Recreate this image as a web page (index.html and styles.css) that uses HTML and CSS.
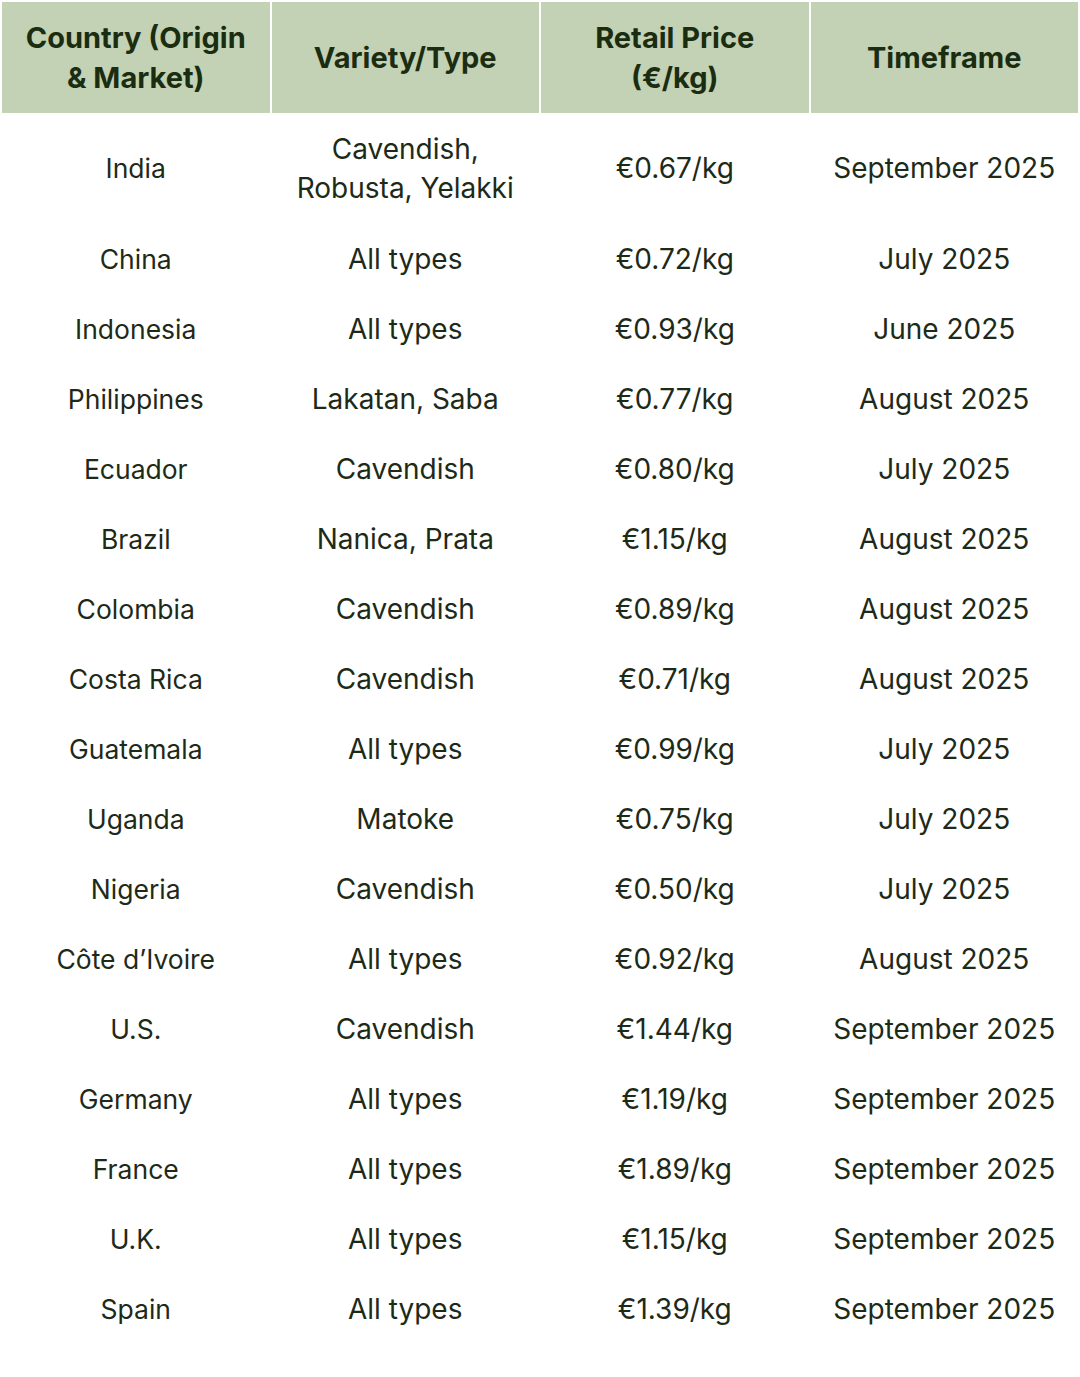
FILE: index.html
```html
<!DOCTYPE html>
<html lang="en">
<head>
<meta charset="utf-8">
<title>Banana retail prices</title>
<link rel="stylesheet" href="styles.css">
</head>
<body>
<table class="prices">
  <thead>
    <tr>
      <th>Country (Origin<br>&amp; Market)</th>
      <th>Variety/Type</th>
      <th>Retail Price<br>(€/kg)</th>
      <th>Timeframe</th>
    </tr>
  </thead>
  <tbody>
    <tr class="tall"><td class="country">India</td><td>Cavendish,<br>Robusta, Yelakki</td><td>€0.67/kg</td><td>September 2025</td></tr>
    <tr><td class="country">China</td><td>All types</td><td>€0.72/kg</td><td>July 2025</td></tr>
    <tr><td class="country">Indonesia</td><td>All types</td><td>€0.93/kg</td><td>June 2025</td></tr>
    <tr><td class="country">Philippines</td><td>Lakatan, Saba</td><td>€0.77/kg</td><td>August 2025</td></tr>
    <tr><td class="country">Ecuador</td><td>Cavendish</td><td>€0.80/kg</td><td>July 2025</td></tr>
    <tr><td class="country">Brazil</td><td>Nanica, Prata</td><td>€1.15/kg</td><td>August 2025</td></tr>
    <tr><td class="country">Colombia</td><td>Cavendish</td><td>€0.89/kg</td><td>August 2025</td></tr>
    <tr><td class="country">Costa Rica</td><td>Cavendish</td><td>€0.71/kg</td><td>August 2025</td></tr>
    <tr><td class="country">Guatemala</td><td>All types</td><td>€0.99/kg</td><td>July 2025</td></tr>
    <tr><td class="country">Uganda</td><td>Matoke</td><td>€0.75/kg</td><td>July 2025</td></tr>
    <tr><td class="country">Nigeria</td><td>Cavendish</td><td>€0.50/kg</td><td>July 2025</td></tr>
    <tr><td class="country">Côte d’Ivoire</td><td>All types</td><td>€0.92/kg</td><td>August 2025</td></tr>
    <tr><td class="country">U.S.</td><td>Cavendish</td><td>€1.44/kg</td><td>September 2025</td></tr>
    <tr><td class="country">Germany</td><td>All types</td><td>€1.19/kg</td><td>September 2025</td></tr>
    <tr><td class="country">France</td><td>All types</td><td>€1.89/kg</td><td>September 2025</td></tr>
    <tr><td class="country">U.K.</td><td>All types</td><td>€1.15/kg</td><td>September 2025</td></tr>
    <tr><td class="country">Spain</td><td>All types</td><td>€1.39/kg</td><td>September 2025</td></tr>
  </tbody>
</table>
</body>
</html>
```
FILE: styles.css
```css
html, body {
  margin: 0;
  padding: 0;
  background: #ffffff;
}
body {
  padding-top: 2px;
  font-family: Inter, "Noto Sans", "Liberation Sans", sans-serif;
}
.prices {
  width: 1080px;
  table-layout: fixed;
  border-collapse: separate;
  border-spacing: 2px 0;
}
.prices th {
  background: #c3d1b5;
  color: #1b2d10;
  font-weight: 700;
  font-size: 29px;
  line-height: 40px;
  height: 111px;
  padding: 0 4px;
  text-align: center;
  vertical-align: middle;
  box-sizing: border-box;
}
.prices td {
  color: #1e2a18;
  font-size: 28px;
  font-weight: 400;
  line-height: 39px;
  padding: 15.5px 2px;
  text-align: center;
  vertical-align: middle;
  white-space: nowrap;
}
.prices td.country {
  font-size: 26.5px;
}
.prices tr.tall td {
  padding-top: 16.5px;
  padding-bottom: 16.5px;
}
```
